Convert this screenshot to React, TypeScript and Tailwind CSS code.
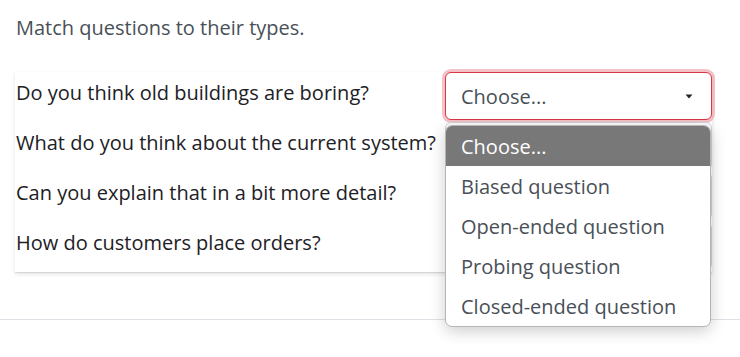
import React from "react";

const questions = [
  "Do you think old buildings are boring?",
  "What do you think about the current system?",
  "Can you explain that in a bit more detail?",
  "How do customers place orders?",
];

const options = [
  "Choose...",
  "Biased question",
  "Open-ended question",
  "Probing question",
  "Closed-ended question",
];

function Caret() {
  return (
    <svg width="8" height="5" viewBox="0 0 8 5" className="shrink-0">
      <path d="M0.5 0.5 L7.5 0.5 L4 4.5 Z" fill="#212529" />
    </svg>
  );
}

function SelectBox({ focused }: { focused?: boolean }) {
  return (
    <div
      className={
        focused
          ? "flex h-[48px] w-[267px] shrink-0 items-center justify-between rounded-[6px] border border-[#dc3545] bg-white pl-[15px] pr-[18px] shadow-[0_0_0_3px_rgba(220,53,69,0.3)]"
          : "flex h-[48px] w-[267px] shrink-0 items-center justify-between rounded-[6px] border border-[#ced4da] bg-white pl-[15px] pr-[18px]"
      }
    >
      <span className="pt-[1px] text-[20px] text-[#495057]">Choose...</span>
      <Caret />
    </div>
  );
}

export default function App() {
  return (
    <div
      className="relative h-[357px] w-[740px] overflow-hidden bg-white"
      style={{ fontFamily: '"Open Sans", "Noto Sans", sans-serif' }}
    >
      <div className="px-[16px] pt-[13px]">
        <p className="text-[20px] leading-[30px] text-[#495057]">Match questions to their types.</p>
      </div>
      <div className="ml-[15px] mt-[29px] w-[697px] bg-white shadow-[0_2px_4px_rgba(0,0,0,0.12),0_1px_0_rgba(0,0,0,0.08)]">
        {questions.map((q, i) => (
          <div key={q} className="flex h-[50px] items-start justify-between">
            <div className="whitespace-nowrap pl-[1px] pt-[6px] text-[20px] leading-[30px] text-[#1d2125]">{q}</div>
            <SelectBox focused={i === 0} />
          </div>
        ))}
      </div>
      <div className="mt-[47px] border-t border-[#dee2e6]" />
      <div className="absolute left-[445px] top-[125px] w-[266px] overflow-hidden rounded-[7px] border border-[#b5b5b5] bg-white shadow-[0_4px_16px_rgba(0,0,0,0.2)]">
        {options.map((o, i) => (
          <div
            key={o}
            className={
              i === 0
                ? "flex h-[40px] items-center bg-[#787878] pl-[15px] pt-[1px] text-[20px] text-white"
                : "flex h-[40px] items-center pl-[15px] pt-[1px] text-[20px] text-[#495057]"
            }
          >
            {o}
          </div>
        ))}
      </div>
    </div>
  );
}
